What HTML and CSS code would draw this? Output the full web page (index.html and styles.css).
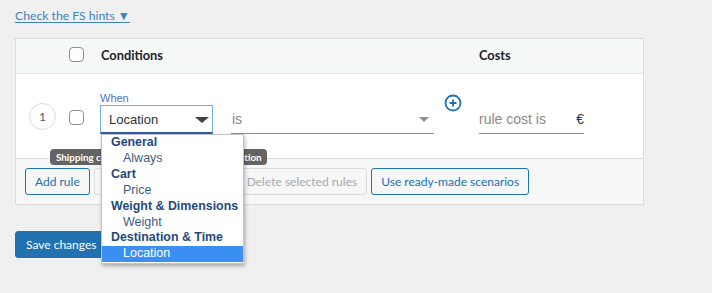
FILE: index.html
```html
<!DOCTYPE html>
<html>
<head>
<meta charset="utf-8">
<link rel="stylesheet" href="styles.css">
</head>
<body>
<div class="page">
  <div class="hints-row"><a class="hints" href="#">Check the FS hints ▼</a></div>
  <div class="rules">
    <div class="thead">
      <div class="c-num"></div>
      <div class="c-chk"><span class="chk"></span></div>
      <div class="th">Conditions</div>
      <div class="th">Costs</div>
    </div>
    <div class="trow">
      <div class="c-num"><span class="num">1</span></div>
      <div class="c-chk"><span class="chk"></span></div>
      <div class="c-cond">
        <div class="field-when">
          <label class="when">When</label>
          <div class="sel-wrap">
            <div class="sel-open">
              <span>Location</span>
              <span class="caret dark"></span>
            </div>
            <ul class="dropdown">
              <li class="grp">General</li>
              <li class="opt">Always</li>
              <li class="grp">Cart</li>
              <li class="opt">Price</li>
              <li class="grp">Weight &amp; Dimensions</li>
              <li class="opt">Weight</li>
              <li class="grp">Destination &amp; Time</li>
              <li class="opt active">Location</li>
            </ul>
          </div>
        </div>
        <div class="sel-line">
          <span class="ph">is</span>
          <span class="caret"></span>
        </div>
        <svg class="plus" width="18" height="18" viewBox="0 0 18 18">
          <circle cx="9" cy="9" r="7.5" fill="none" stroke="#2271b1" stroke-width="1.8"/>
          <path d="M9 5.5v7M5.5 9h7" stroke="#2271b1" stroke-width="1.8" fill="none"/>
        </svg>
      </div>
      <div class="c-cost">
        <div class="cost-input">
          <span class="ph">rule cost is</span>
          <span class="euro">€</span>
        </div>
      </div>
    </div>
    <div class="tfoot">
      <button class="btn">Add rule</button>
      <button class="btn disabled dup">Duplicate selected rules</button>
      <button class="btn disabled">Delete selected rules</button>
      <button class="btn">Use ready-made scenarios</button>
    </div>
    <div class="tooltip">Shipping cost is calculated from the destination</div>
  </div>
  <div class="save-row">
    <button class="btn-primary">Save changes</button>
  </div>
</div>
</body>
</html>
```
FILE: styles.css
```css
* { box-sizing: border-box; }
html, body { margin: 0; padding: 0; }
body {
  background: #f0f0f1;
  font-family: "Lato", "Noto Sans", sans-serif;
  font-size: 13px;
  color: #1d2327;
  width: 712px;
  height: 293px;
  overflow: hidden;
}
.page { padding: 7px 0 0 15px; }
.hints-row { height: 18px; }
.hints {
  color: #3e82c4;
  font-size: 12.2px;
  line-height: 18px;
  text-decoration: underline;
  text-underline-offset: 2px;
}
.rules {
  position: relative;
  margin-top: 13px;
  width: 629px;
  border: 1px solid #dcdcde;
  background: #fff;
}
.thead, .trow {
  display: grid;
  grid-template-columns: 53px 32px 378px 1fr;
}
.thead {
  height: 35px;
  background: #f6f7f7;
  border-bottom: 1px solid #e2e4e7;
  align-items: center;
}
.thead .chk { margin-top: -3px; }
.th { font-weight: bold; font-size: 12.8px; color: #1d2327; margin-top: -2px; }
.chk {
  display: block;
  width: 15px;
  height: 15px;
  border: 1px solid #8c8f94;
  border-radius: 4px;
  background: #fff;
}
.trow {
  height: 84px;
  align-items: center;
}
.c-num { display: flex; padding-left: 13px; }
.num {
  display: flex;
  align-items: center;
  justify-content: center;
  width: 27px;
  height: 27px;
  border: 1px solid #dcdcde;
  border-radius: 50%;
  font-family: "Lato", sans-serif;
  font-size: 12px;
  color: #50575e;
}
.trow .chk { margin-top: 2px; }
.c-cond {
  display: flex;
  align-items: flex-start;
  height: 100%;
  padding-top: 18px;
}
.field-when { width: 113px; margin-left: -1px; }
.when {
  display: block;
  font-family: "Liberation Sans", Arial, sans-serif;
  font-size: 11px;
  line-height: 12px;
  color: #4f6fce;
  margin-bottom: 1px;
}
.sel-wrap { position: relative; }
.sel-open {
  display: flex;
  align-items: center;
  justify-content: space-between;
  height: 29px;
  padding: 0 3px 0 8px;
  border: 1px solid #72aee6;
  border-bottom: 2px solid #3858a5;
  font-family: "Liberation Sans", Arial, sans-serif;
  font-size: 13px;
  color: #2c3338;
}
.caret {
  width: 0; height: 0;
  border-left: 5px solid transparent;
  border-right: 5px solid transparent;
  border-top: 5px solid #8c8f94;
}
.caret.dark {
  border-left-width: 7px;
  border-right-width: 7px;
  border-top-width: 6px;
  border-top-color: #3c434a;
  margin-top: 2px;
}
.dropdown {
  position: absolute;
  z-index: 5;
  top: 100%;
  left: 1px;
  width: 143px;
  margin: 0;
  padding: 0 0 1px;
  list-style: none;
  background: #fff;
  border: 1px solid #c3c4c7;
  box-shadow: 1px 2px 4px rgba(0,0,0,0.3);
  font-family: "Liberation Sans", Arial, sans-serif;
  font-size: 12px;
  line-height: 15.9px;
  white-space: nowrap;
}
.dropdown .grp { font-weight: bold; font-size: 12.4px; color: #234a7c; padding-left: 9px; }
.dropdown .opt { color: #3f5d84; padding-left: 21px; font-size: 12.5px; }
.dropdown .opt.active { background: #3b8ff3; color: #fff; }
.sel-line {
  display: flex;
  align-items: center;
  justify-content: space-between;
  width: 203px;
  height: 29px;
  margin-left: 18px;
  margin-top: 13px;
  padding: 0 5px 0 1px;
  border-bottom: 1px solid #8c8f94;
}
.ph {
  font-family: "Liberation Sans", Arial, sans-serif;
  font-size: 14px;
  color: #8a8a8a;
}
.plus { margin-left: 10px; margin-top: 2px; }
.c-cost {
  display: flex;
  align-items: flex-start;
  height: 100%;
  padding-top: 31px;
}
.cost-input {
  display: flex;
  align-items: center;
  justify-content: space-between;
  width: 105px;
  height: 29px;
  border-bottom: 1px solid #8c8f94;
}
.euro {
  font-family: "Liberation Sans", Arial, sans-serif;
  font-size: 14px;
  color: #2c3338;
}
.tfoot {
  display: flex;
  gap: 4px;
  height: 46px;
  padding: 9px 9px 0;
  background: #f6f7f7;
  border-top: 1px solid #dcdcde;
}
.btn {
  height: 27px;
  padding: 0 9px;
  border: 1px solid #2271b1;
  border-radius: 3px;
  background: #f6f7f7;
  color: #2271b1;
  font-family: "Lato", sans-serif;
  font-size: 12px;
}
.btn.disabled {
  border-color: #dcdcde;
  color: #a7aaad;
}
.btn.dup { width: 139px; overflow: hidden; white-space: nowrap; }
.tooltip {
  position: absolute;
  z-index: 3;
  left: 34px;
  top: 110px;
  height: 16px;
  padding: 0 5px 0 6px;
  border-radius: 4px;
  background: #646464;
  color: #fff;
  font-size: 9.8px;
  font-weight: bold;
  line-height: 16px;
  white-space: nowrap;
}
.save-row { margin-top: 26px; }
.btn-primary {
  height: 27px;
  padding: 0 10px;
  border: 1px solid #2271b1;
  border-radius: 3px;
  background: #2271b1;
  color: #fff;
  font-family: "Lato", sans-serif;
  font-size: 12px;
}
```
